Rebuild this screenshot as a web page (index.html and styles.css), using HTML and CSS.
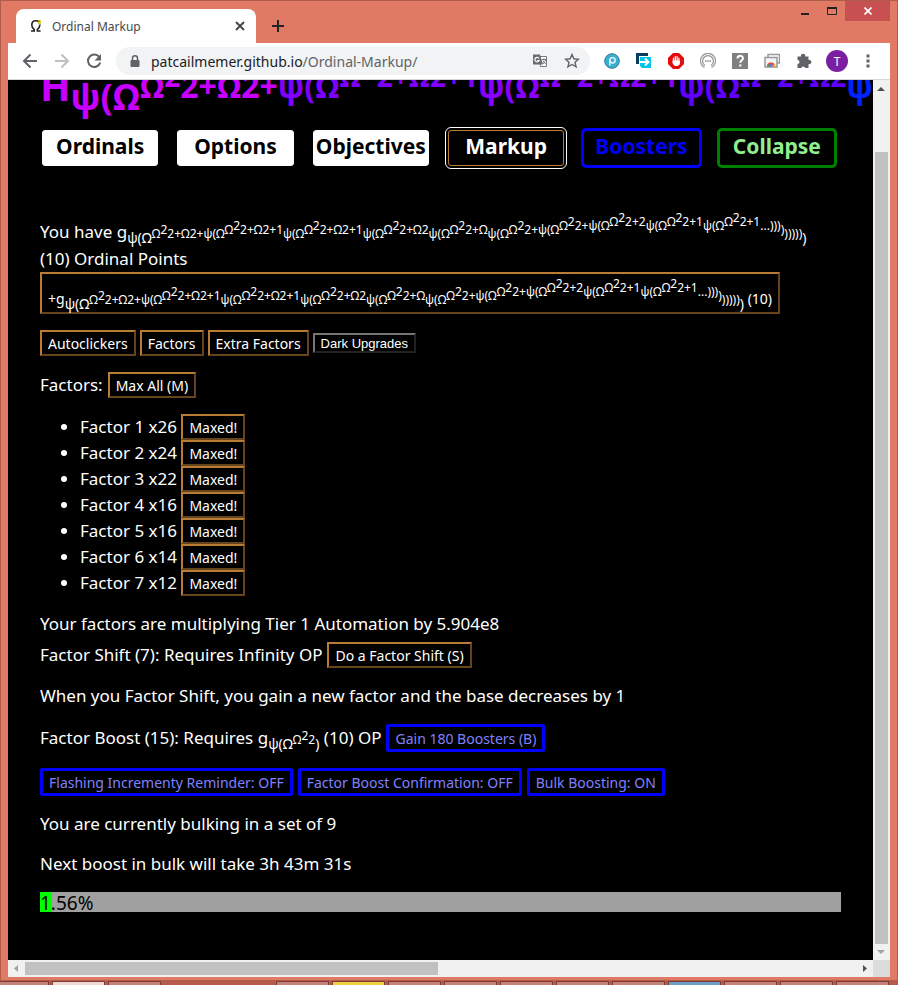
FILE: index.html
```html
<!DOCTYPE html>
<html lang="en">
<head>
  <meta charset="UTF-8">
  <meta name="viewport" content="width=device-width, initial-scale=1.0">
  <title>Ordinal Markup</title>
  <link rel="stylesheet" href="styles.css">
</head>
<body>
  <div class="window">
    <header class="titlebar">
      <div class="browser-tab">
        <svg class="favicon" width="16" height="16" viewBox="0 0 16 16"><path d="M3 13h3.2v-1.6C4.300 10.200 3.800 8.500 3.800 7c0-2.600 1.700-4.200 4-4.200s4 1.600 4 4.200c0 1.500-.5 3.200-2.400 4.400V13h3.200" fill="none" stroke="#222" stroke-width="1.600"/><path d="M10 3l3-1v4l-2 1z" fill="#c6e12a"/><circle cx="11" cy="3" r="1" fill="#f60"/></svg>
        <span class="tab-title">Ordinal Markup</span>
        <button class="icon-btn" aria-label="Close tab"><svg width="10" height="10" viewBox="0 0 10 10"><path d="M1 1l8 8M9 1l-8 8" stroke="#45494d" stroke-width="2"/></svg></button>
      </div>
      <button class="icon-btn new-tab" aria-label="New tab"><svg width="12" height="12" viewBox="0 0 12 12"><path d="M6 0v12M0 6h12" stroke="#222" stroke-width="2"/></svg></button>
      <div class="window-buttons">
        <button class="win-btn" aria-label="Minimize"><svg width="10" height="8" viewBox="0 0 10 8"><path d="M1 7h8" stroke="#222" stroke-width="2"/></svg></button>
        <button class="win-btn" aria-label="Maximize"><svg width="10" height="8" viewBox="0 0 10 8"><path d="M.5 0v7.500h9V0" fill="none" stroke="#222"/><path d="M0 1h10" stroke="#222" stroke-width="2"/></svg></button>
        <button class="win-btn close" aria-label="Close"><svg width="8" height="8" viewBox="0 0 8 8"><path d="M.5 .5l7 7M7.500 .5l-7 7" stroke="#fff" stroke-width="1.700"/></svg></button>
      </div>
    </header>

    <div class="toolbar">
      <button class="icon-btn" aria-label="Back"><svg width="16" height="16" viewBox="0 0 16 16"><path d="M15 8H2M8.500 1.500L2 8l6.500 6.500" fill="none" stroke="#5f6368" stroke-width="2"/></svg></button>
      <button class="icon-btn" aria-label="Forward"><svg width="16" height="16" viewBox="0 0 16 16"><path d="M1 8h13M7.500 1.500L14 8l-6.500 6.500" fill="none" stroke="#bdc0c3" stroke-width="2"/></svg></button>
      <button class="icon-btn" aria-label="Reload"><svg width="16" height="16" viewBox="0 0 16 16"><path d="M13.500 4.500A6.200 6.200 0 1 0 14.200 9.500" fill="none" stroke="#5f6368" stroke-width="2"/><path d="M15 1v6.500H8.500z" fill="#5f6368"/></svg></button>
      <div class="address">
        <svg width="10" height="13" viewBox="0 0 10 13"><rect x="0.500" y="5" width="9" height="7" rx="1" fill="#5f6368"/><path d="M2.500 5V3.300a2.500 2.500 0 0 1 5 0V5" fill="none" stroke="#5f6368" stroke-width="1.500"/></svg>
        <span class="url"><b>patcailmemer.github.io</b>/Ordinal-Markup/</span>
        <button class="icon-btn" aria-label="Translate"><svg width="16" height="16" viewBox="0 0 16 16"><path d="M7 3.500h7.500v10H8.500z" fill="#fff" stroke="#777"/><path d="M1 1.500h7l3 10H1z" fill="#696d71"/><path d="M7 5.500A2.200 2.200 0 1 0 7.100 7.500H5.200" fill="none" stroke="#fff" stroke-width="1.200"/><path d="M10 6.500h4M12 5.500v1M13.500 7c-.5 2-1.500 3-2.500 4M11 7.500c.5 1.500 1.500 2.500 2.500 3.500" fill="none" stroke="#777"/></svg></button>
        <button class="icon-btn star" aria-label="Bookmark"><svg width="16" height="16" viewBox="0 0 16 16"><path d="M8 1.500l1.900 4.300 4.600.4-3.500 3.100 1.100 4.600L8 11.500l-4.100 2.400L5 9.300 1.500 6.200l4.600-.4z" fill="none" stroke="#5f6368" stroke-width="1.400"/></svg></button>
      </div>
      <div class="extensions">
        <svg width="16" height="16" viewBox="0 0 16 16"><circle cx="8" cy="8" r="7.300" fill="#3cafd0" stroke="#2a7b96"/><circle cx="8.500" cy="7.300" r="2.700" fill="none" stroke="#e8fbff" stroke-width="1.400"/><path d="M5.800 12.500V7" stroke="#e8fbff" stroke-width="1.400"/></svg>
        <svg width="16" height="16" viewBox="0 0 16 16"><path d="M0 0h12v3H3v8H0z" fill="#073f5f"/><path d="M4 4h11v11H6L4 13z" fill="#00c4e8"/><path d="M4 9h8M9 5.500L12.500 9 9 12.500" fill="none" stroke="#fff" stroke-width="2"/></svg>
        <svg width="16" height="16" viewBox="0 0 16 16"><path d="M5 0h6l5 5v6l-5 5H5l-5-5V5z" fill="#e60b0b"/><path d="M5.500 8V5M7.300 7.500V3.500M9.100 7.500V3.500M10.900 8V5M11.500 8.500c0 3-1.500 4-3 4s-2.800-1-3.500-3V8h6.500z" fill="#fff" stroke="#fff" stroke-width="1.200" stroke-linecap="round"/></svg>
        <svg width="16" height="16" viewBox="0 0 16 16"><path d="M4.500 14.500a7.500 7.500 0 1 1 7 0M5 12.500a5.400 5.400 0 1 1 6 0" fill="none" stroke="#999" stroke-width="1.300"/><path d="M5 8h1.500M7.300 8h1.500M9.600 8h1.500" stroke="#888" stroke-width="1.500"/></svg>
        <svg width="16" height="16" viewBox="0 0 16 16"><path d="M0 0h16v16H0z" fill="#808080"/><path d="M5.500 5.500C5.500 2 11 2 11 5.300c0 2-2.700 2-2.700 4.500" fill="none" stroke="#fff" stroke-width="2"/><path d="M7.200 11.500h2.200v2H7.200z" fill="#fff"/></svg>
        <svg width="16" height="16" viewBox="0 0 16 16"><path d="M4 4V1.500h11.500V10H13" fill="none" stroke="#999" stroke-width="1.500"/><rect x="1" y="4.500" width="12" height="9.500" fill="#f4f4f4" stroke="#999" stroke-width="1.500"/><path d="M3 13.500a4 4 0 0 1 8 0z" fill="#ea4335"/><path d="M3 13.500a4 4 0 0 1 1-2.600l2 2.600z" fill="#34a853"/><path d="M11 13.500a4 4 0 0 0-1-2.600l-2 2.600z" fill="#fbbc05"/><circle cx="7" cy="12.500" r="1.500" fill="#4285f4"/></svg>
        <svg width="16" height="16" viewBox="0 0 16 16"><path d="M1.500 3.500h3.500a2.200 2.200 0 1 1 4.200 0h3.300V7a2.200 2.200 0 1 1 0 4.200v3.800H9.300a2.200 2.200 0 0 0-4.200 0H1.500V11a2 2 0 0 0 0-4z" fill="#5f6368"/></svg>
      </div>
      <button class="avatar" aria-label="Profile">T</button>
      <button class="icon-btn" aria-label="Menu"><svg width="4" height="14" viewBox="0 0 4 14"><path d="M.5 .5h3v3h-3zM.5 5.500h3v3h-3zM.5 10.500h3v3h-3z" fill="#5f6368"/></svg></button>
    </div>

    <div class="viewport">
      <main class="page">
        <h1 class="ordinal">H<sub>ψ(Ω<sup>Ω<sup>2</sup>2+Ω2+<span class="hue-1">ψ(Ω<sup>Ω<sup>2</sup>2+Ω2+1</sup></span><span class="hue-2">ψ(Ω<sup>Ω<sup>2</sup>2+Ω2+1</sup></span><span class="hue-3">ψ(Ω<sup>Ω<sup>2</sup>2+Ω2</sup></span><span class="hue-4">ψ</span></sup></sub></h1>

        <nav class="tabs">
          <button class="tab">Ordinals</button>
          <button class="tab">Options</button>
          <button class="tab">Objectives</button>
          <button class="tab markup active">Markup</button>
          <button class="tab boosters">Boosters</button>
          <button class="tab collapse">Collapse</button>
        </nav>

        <p class="points">You have g<sub>ψ(Ω<sup>Ω<sup>2</sup>2+Ω2+ψ(Ω<sup>Ω<sup>2</sup>2+Ω2+1</sup>ψ(Ω<sup>Ω<sup>2</sup>2+Ω2+1</sup>ψ(Ω<sup>Ω<sup>2</sup>2+Ω2</sup>ψ(Ω<sup>Ω<sup>2</sup>2+Ω</sup>ψ(Ω<sup>Ω<sup>2</sup>2+ψ(Ω<sup>Ω<sup>2</sup>2+ψ(Ω<sup>Ω<sup>2</sup>2+2</sup>ψ(Ω<sup>Ω<sup>2</sup>2+1</sup>ψ(Ω<sup>Ω<sup>2</sup>2+1</sup>...)))</sup>)</sup>)))))</sup>)</sub> <span class="nowrap">(10) Ordinal Points</span></p>
        <button class="btn gain">+g<sub>ψ(Ω<sup>Ω<sup>2</sup>2+Ω2+ψ(Ω<sup>Ω<sup>2</sup>2+Ω2+1</sup>ψ(Ω<sup>Ω<sup>2</sup>2+Ω2+1</sup>ψ(Ω<sup>Ω<sup>2</sup>2+Ω2</sup>ψ(Ω<sup>Ω<sup>2</sup>2+Ω</sup>ψ(Ω<sup>Ω<sup>2</sup>2+ψ(Ω<sup>Ω<sup>2</sup>2+ψ(Ω<sup>Ω<sup>2</sup>2+2</sup>ψ(Ω<sup>Ω<sup>2</sup>2+1</sup>ψ(Ω<sup>Ω<sup>2</sup>2+1</sup>...)))</sup>)</sup>)))))</sup>)</sub> (10)</button>

        <div class="row subtabs">
          <button class="btn">Autoclickers</button>
          <button class="btn">Factors</button>
          <button class="btn">Extra Factors</button>
          <button class="btn dark">Dark Upgrades</button>
        </div>

        <div class="row">Factors: <button class="btn">Max All (M)</button></div>
        <ul class="factors">
          <li>Factor 1 x26 <button class="btn">Maxed!</button></li>
          <li>Factor 2 x24 <button class="btn">Maxed!</button></li>
          <li>Factor 3 x22 <button class="btn">Maxed!</button></li>
          <li>Factor 4 x16 <button class="btn">Maxed!</button></li>
          <li>Factor 5 x16 <button class="btn">Maxed!</button></li>
          <li>Factor 6 x14 <button class="btn">Maxed!</button></li>
          <li>Factor 7 x12 <button class="btn">Maxed!</button></li>
        </ul>

        <p class="multiplier">Your factors are multiplying Tier 1 Automation by 5.904e8</p>
        <div class="row shift">Factor Shift (7): Requires Infinity OP <button class="btn">Do a Factor Shift (S)</button></div>
        <p>When you Factor Shift, you gain a new factor and the base decreases by 1</p>
        <div class="row boost"><span>Factor Boost (15): Requires g<sub>ψ(Ω<sup>Ω<sup>2</sup>2</sup>)</sub> (10) OP</span> <button class="btn booster">Gain 180 Boosters (B)</button></div>
        <div class="row toggles">
          <button class="btn booster">Flashing Incrementy Reminder: OFF</button>
          <button class="btn booster">Factor Boost Confirmation: OFF</button>
          <button class="btn booster">Bulk Boosting: ON</button>
        </div>
        <p>You are currently bulking in a set of 9</p>
        <p>Next boost in bulk will take 3h 43m 31s</p>
        <div class="progress"><div class="progress-fill" style="width: 1.56%"></div><span class="progress-text">1.56%</span></div>
      </main>

      <div class="scrollbar vertical">
        <svg width="15" height="16" viewBox="0 0 15 16"><path d="M4 11l4-4 4 4z" fill="#505050"/></svg>
        <div class="track"><div class="thumb"></div></div>
        <svg width="15" height="16" viewBox="0 0 15 16"><path d="M4 6l4 4 4-4z" fill="#a3a3a3"/></svg>
      </div>
      <div class="scrollbar horizontal">
        <svg width="17" height="17" viewBox="0 0 17 17"><path d="M10 5v7L6 8.500z" fill="#a3a3a3"/></svg>
        <div class="track"><div class="thumb"></div></div>
        <svg width="17" height="17" viewBox="0 0 17 17"><path d="M7 5v7l4-3.500z" fill="#505050"/></svg>
      </div>
      <div class="corner"></div>
    </div>
  </div>

  <footer class="taskbar">
    <div class="task first"></div>
    <div class="task current"></div>
    <div class="task"></div>
    <div class="task empty"></div>
    <div class="task empty"></div>
    <div class="task"></div>
    <div class="task alert"></div>
    <div class="task"></div>
    <div class="task"></div>
    <div class="task"></div>
    <div class="task"></div>
    <div class="task"></div>
    <div class="task blue"></div>
    <div class="task"></div>
    <div class="task"></div>
    <div class="task"></div>
  </footer>
</body>
</html>
```
FILE: styles.css
```css
* {
  box-sizing: border-box;
}
body {
  margin: 0;
  height: 100vh;
  display: flex;
  flex-direction: column;
  overflow: hidden;
  background-color: #b55b4b;
  font-family: "Noto Sans", sans-serif;
  font-size: 17px;
}
button {
  font-family: inherit;
  margin: 0;
}
svg {
  display: block;
  flex: none;
}

/* Browser window */
.window {
  flex: 1;
  min-height: 0;
  display: flex;
  flex-direction: column;
  padding: 0 7px 3px;
  background-color: #e17a64;
  border: 1px solid #b05b4c;
}
.titlebar {
  display: flex;
  align-items: flex-start;
  height: 42px;
  flex: none;
}
.browser-tab {
  display: flex;
  align-items: center;
  gap: 8px;
  width: 240px;
  height: 34px;
  margin: 8px 0 0 8px;
  padding: 0 11px 0 12px;
  background-color: white;
  border-radius: 8px 8px 0 0;
}
.tab-title {
  flex: 1;
  font-size: 12px;
  color: #45494d;
}
.icon-btn {
  display: flex;
  padding: 0;
  border: none;
  background: none;
  flex: none;
}
.new-tab {
  margin: 19px 0 0 16px;
}
.window-buttons {
  display: flex;
  margin-left: auto;
}
.win-btn {
  display: flex;
  align-items: center;
  justify-content: center;
  width: 27px;
  height: 20px;
  padding: 0;
  border: none;
  background: none;
}
.win-btn.close {
  width: 45px;
  background-color: #c75050;
}
.toolbar {
  display: flex;
  align-items: center;
  gap: 16px;
  height: 37px;
  flex: none;
  padding: 0 20px 0 14px;
  background-color: white;
  border-bottom: 1px solid #d5d7da;
}
.address {
  flex: 1;
  display: flex;
  align-items: center;
  height: 28px;
  padding: 0 10px 0 14px;
  margin-left: -2px;
  background-color: #f1f3f4;
  border-radius: 14px;
}
.url {
  flex: 1;
  margin-left: 11px;
  font-size: 14px;
  color: #5f6368;
}
.url b {
  font-weight: normal;
  color: #202124;
}
.star {
  margin-left: 16px;
}
.extensions {
  display: flex;
  gap: 16px;
  margin-left: -2px;
}
.avatar {
  width: 22px;
  height: 22px;
  margin: 0 2px 0 -2px;
  padding: 0;
  border: none;
  border-radius: 50%;
  background-color: #7b1fa2;
  color: white;
  font-size: 12px;
}

/* Page and its scrollbars */
.viewport {
  flex: 1;
  min-height: 0;
  display: grid;
  grid-template-columns: 1fr 17px;
  grid-template-rows: 1fr 17px;
}
.page {
  min-width: 0;
  padding: 0 32px;
  overflow: hidden;
  background-color: black;
  color: white;
}
.scrollbar {
  display: flex;
  background-color: #f1f1f1;
}
.scrollbar.vertical {
  flex-direction: column;
}
.scrollbar.horizontal {
  grid-row: 2;
}
.track {
  flex: 1;
  display: flex;
}
.vertical .track {
  flex-direction: column;
  justify-content: flex-end;
  padding: 0 2px;
}
.horizontal .track {
  padding: 2px 0;
}
.thumb {
  background-color: #c1c1c1;
}
.vertical .thumb {
  height: 93.4%;
}
.horizontal .thumb {
  width: 49.7%;
}
.corner {
  background-color: #dcdcdc;
}

/* Ordinals */
sub, sup {
  line-height: 0;
}
sub {
  font-size: 14px;
  vertical-align: -5px;
}
sup {
  font-size: 12px;
  vertical-align: 4px;
}
sub sup {
  vertical-align: 5px;
}
sup sup {
  vertical-align: 4px;
}
/* page is scrolled a little, so the top of the heading is out of view */
.ordinal {
  height: 63px;
  margin: -15px -32px 0 0;
  white-space: nowrap;
  font-size: 40px;
  line-height: 20px;
  color: #c800ff;
}
.ordinal sub {
  font-size: 36px;
  vertical-align: -9px;
}
.ordinal sup {
  font-size: 32px;
  vertical-align: 12px;
}
.ordinal sup sup {
  font-size: 28px;
  vertical-align: 11px;
}
.hue-1 {
  color: #8000ff;
}
.hue-2 {
  color: #8a00ff;
}
.hue-3 {
  color: #6000ff;
}
.hue-4 {
  color: #0022ff;
}

/* Main tabs */
.tabs {
  display: grid;
  grid-template-columns: repeat(6, minmax(0, 1fr));
  gap: 15px;
  padding-right: 4px;
}
.tab {
  height: 40px;
  padding: 0 0 4px;
  border: 2px solid black;
  border-radius: 5px;
  background-color: white;
  background-clip: padding-box;
  color: black;
  font-size: 21px;
  font-weight: bold;
}
.tab.active {
  height: 36px;
  margin: 2px;
  border: 1px solid #b97c34;
  border-radius: 3px;
  outline: 1px solid white;
  outline-offset: 2px;
  background-color: black;
  color: white;
}
.tab.boosters {
  border: 3px solid blue;
  background-color: black;
  color: blue;
}
.tab.collapse {
  border: 3px solid green;
  background-color: black;
  color: lightgreen;
}

/* Markup tab */
p {
  margin: 16px 0;
  line-height: 24px;
}
.points {
  margin: 50px 0 0;
  line-height: 27px;
}
.nowrap {
  display: inline-block;
}
.btn {
  height: 26px;
  padding: 0 6px;
  border: 2px outset #b97c34;
  background-color: black;
  color: white;
  font-size: 14px;
  white-space: nowrap;
}
.btn.gain {
  display: block;
  height: 42px;
  padding-top: 6px;
}
.btn.dark {
  height: 20px;
  border-color: #767676;
  font-family: "Liberation Sans", sans-serif;
  font-size: 13px;
}
.btn.booster {
  height: 28px;
  border: 3px solid blue;
  border-radius: 2px;
  color: #8080ff;
}
.row {
  display: flex;
  align-items: baseline;
  gap: 5px;
  margin: 16px 0;
}
.subtabs {
  align-items: center;
  gap: 4px;
}
.factors {
  margin: 16px 0;
  padding-left: 40px;
}
.factors li {
  height: 26px;
  line-height: 24px;
}
.multiplier {
  margin-bottom: 0;
}
.row.shift {
  margin: 6px 0 16px;
}
.progress {
  position: relative;
  height: 20px;
  background-color: #a0a0a0;
}
.progress-fill {
  height: 100%;
  background-color: lime;
}
.progress-text {
  position: absolute;
  top: 0;
  left: 0;
  color: black;
  font-size: 19px;
  line-height: 22px;
}

/* Taskbar */
.taskbar {
  display: flex;
  gap: 3px;
  height: 4px;
  flex: none;
  margin-left: -4px;
}
.task {
  flex: 0 0 53px;
  background-color: #c4827a;
  border: 1px solid #7d3d33;
  border-bottom: none;
}
.task.current {
  background-color: #f0d8d5;
}
.task.empty {
  visibility: hidden;
}
.task.alert {
  background-color: #f0d040;
}
.task.blue {
  background-color: #6aa0c8;
}
```
